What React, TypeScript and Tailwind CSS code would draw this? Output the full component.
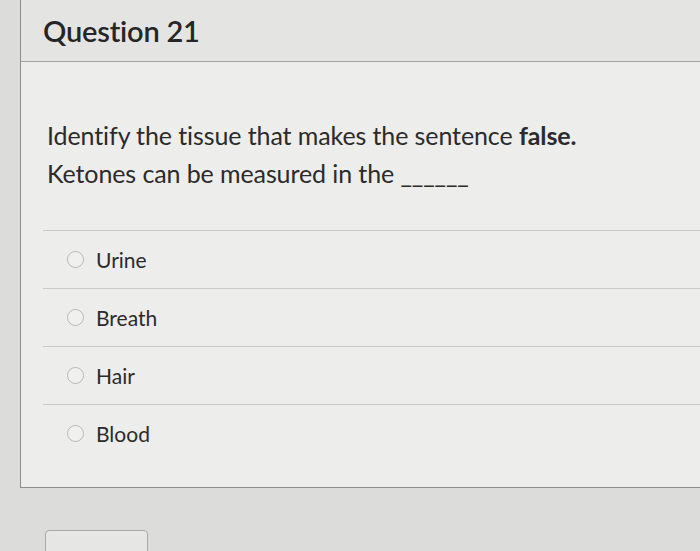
import React from 'react';

const answers = ['Urine', 'Breath', 'Hair', 'Blood'];

const App: React.FC = () => {
  return (
    <div className="h-[551px] w-[700px] overflow-hidden bg-[#dcdcda] pl-[20px] text-[#2b2b2b] font-['Lato','Liberation_Sans',sans-serif]">
      <div className="w-[720px] border-b border-l border-[#8e8e8c] bg-[#ededeb]">
        {/* Header */}
        <div className="flex h-[62px] items-center border-b border-[#a3a3a1] bg-[#e4e4e2] pl-[22px]">
          <h2 className="text-[29px] font-semibold leading-none tracking-[-0.2px] text-[#262626]">Question 21</h2>
        </div>

        {/* Body */}
        <div className="pt-[54px] pl-[26px] text-[25px] leading-[38px] tracking-[-0.1px]">
          <p>
            Identify the tissue that makes the sentence <span className="font-bold">false.</span>
          </p>
          <p>Ketones can be measured in the ______</p>
        </div>

        <div className="mt-[38px] ml-[22px] pb-[25px]">
          {answers.map((a) => (
            <label key={a} className="flex h-[58px] items-center border-t border-[#c9c9c7]">
              <span className="ml-[24px] h-[17px] w-[17px] rounded-full border-[1.5px] border-[#b8b8b6] bg-[#f0f0ee]" />
              <span className="ml-[12px] text-[21px] text-[#2b2b2b]">{a}</span>
            </label>
          ))}
        </div>
      </div>

      <div className="mt-[42px] ml-[25px] h-[40px] w-[103px] rounded-[4px] border border-[#a9a9a7] bg-[#e6e6e4]" />
    </div>
  );
};

export default App;
